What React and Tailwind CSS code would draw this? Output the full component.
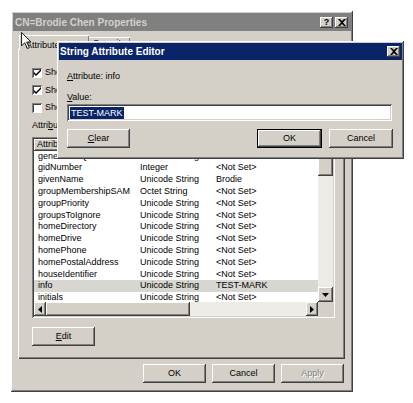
import React from "react";

const raised =
  "shadow-[inset_-1px_-1px_#404040,inset_1px_1px_#ffffff,inset_-2px_-2px_#808080,inset_2px_2px_#d4d0c8]";
const sunken =
  "shadow-[inset_1px_1px_#808080,inset_-1px_-1px_#ffffff,inset_2px_2px_#404040,inset_-2px_-2px_#d4d0c8]";
const smallRaised =
  "shadow-[inset_-1px_-1px_#404040,inset_1px_1px_#ffffff,inset_-2px_-2px_#808080]";

const rows = [
  ["generationQualifier", "Unicode String", "<Not Set>"],
  ["gidNumber", "Integer", "<Not Set>"],
  ["givenName", "Unicode String", "Brodie"],
  ["groupMembershipSAM", "Octet String", "<Not Set>"],
  ["groupPriority", "Unicode String", "<Not Set>"],
  ["groupsToIgnore", "Unicode String", "<Not Set>"],
  ["homeDirectory", "Unicode String", "<Not Set>"],
  ["homeDrive", "Unicode String", "<Not Set>"],
  ["homePhone", "Unicode String", "<Not Set>"],
  ["homePostalAddress", "Unicode String", "<Not Set>"],
  ["houseIdentifier", "Unicode String", "<Not Set>"],
  ["info", "Unicode String", "TEST-MARK"],
  ["initials", "Unicode String", "<Not Set>"],
];

const CloseGlyph = () => (
  <svg width="8" height="7" viewBox="0 0 8 7">
    <path d="M0 0h2l2 2 2-2h2L5 3.5 8 7H6L4 5 2 7H0l3-3.5z" fill="#000" />
  </svg>
);

const Btn = ({ children, className = "" }) => (
  <div
    className={`flex items-center justify-center bg-[#d4d0c8] ${raised} ${className}`}
  >
    {children}
  </div>
);

const Checkbox = ({ checked, label }) => (
  <div className="flex h-[17.5px] items-center gap-[3px] whitespace-nowrap">
    <div className="flex h-[10px] w-[10px] items-center justify-center bg-white shadow-[inset_1px_1px_#808080,inset_-1px_-1px_#ffffff,inset_2px_2px_#404040]">
      {checked && (
        <svg width="7" height="7" viewBox="0 0 7 7">
          <path d="M0 3l2 2 5-5v2L2 7 0 5z" fill="#000" />
        </svg>
      )}
    </div>
    <span>{label}</span>
  </div>
);

const Arrow = ({ dir }) => {
  const d = {
    down: "M0 0h7L3.5 4z",
    left: "M4 0v7L0 3.5z",
    right: "M0 0v7l4-3.5z",
  }[dir];
  const box = dir === "down" ? "0 0 7 4" : "0 0 4 7";
  return (
    <svg width={dir === "down" ? 7 : 4} height={dir === "down" ? 4 : 7} viewBox={box}>
      <path d={d} fill="#000" />
    </svg>
  );
};

export default function App() {
  return (
    <div className="relative h-[403px] w-[413px] overflow-hidden bg-white font-['Liberation_Sans',Arial,sans-serif] text-[9px] text-black">
      {/* Properties window */}
      <div
        className={`absolute left-[11px] top-[11px] z-0 flex h-[381px] w-[342px] flex-col bg-[#d4d0c8] p-[2px] ${raised}`}
      >
        <div className="flex h-[18px] items-center justify-between bg-[#808080] pl-[2px] pr-[3px]">
          <span className="text-[10px] font-bold text-[#d4d0c8]">
            CN=Brodie Chen Properties
          </span>
          <div className="flex gap-[2px]">
            <div className={`flex h-[11px] w-[13px] items-center justify-center bg-[#d4d0c8] text-[9px] font-bold leading-none ${smallRaised}`}>
              ?
            </div>
            <div className={`flex h-[11px] w-[13px] items-center justify-center bg-[#d4d0c8] ${smallRaised}`}>
              <CloseGlyph />
            </div>
          </div>
        </div>

        <div className="flex flex-1 flex-col pl-[5px] pr-[6px]">
          {/* tabs */}
          <div className="mt-[4px] flex h-[14px] items-end whitespace-nowrap leading-none">
            <div className="relative z-10 -mb-[1px] ml-[1px] flex h-[15px] w-[70px] items-end overflow-hidden border-l border-t border-white bg-[#d4d0c8] pl-[6px] shadow-[inset_-1px_0_#808080]">
              Attribute Editor
            </div>
            <div className="flex h-[12px] w-[41px] items-end overflow-hidden border-t border-white bg-[#d4d0c8] pb-[1px] pl-[4px] shadow-[inset_-1px_0_#808080]">
              Security
            </div>
          </div>

          {/* tab pane */}
          <div className="flex h-[310px] flex-col border-l border-t border-white px-[13px] pt-[14px] shadow-[inset_-1px_-1px_#404040,inset_-2px_-2px_#808080]">
            <Checkbox checked label="Show mandatory attributes" />
            <Checkbox checked label="Show optional attributes" />
            <Checkbox label="Show only attributes that have values" />
            <div className="mt-[3px] flex h-[12px] items-center">
              Attri<span className="underline">b</span>utes:
            </div>

            {/* list view */}
            <div className={`mt-[5.5px] h-[181px] w-[303px] bg-white p-[2px] ${sunken}`}>
              <div className="grid h-full grid-cols-[284px_15px] grid-rows-[163px_14px]">
                <div className="overflow-hidden">
                  <div className="flex h-[11.5px]">
                    <div className={`flex w-[102px] items-center bg-[#d4d0c8] pl-[3px] ${smallRaised}`}>
                      Attribute
                    </div>
                    <div className={`flex w-[76px] items-center bg-[#d4d0c8] pl-[3px] ${smallRaised}`}>
                      Syntax
                    </div>
                    <div className={`flex flex-1 items-center bg-[#d4d0c8] pl-[3px] ${smallRaised}`}>
                      Value
                    </div>
                  </div>
                  {rows.map(([name, syntax, value]) => (
                    <div
                      key={name}
                      className={`flex h-[11.8px] items-center whitespace-nowrap ${name === "info" ? "bg-[#d8d6d0]" : ""}`}
                    >
                      <span className="w-[102px] pl-[4px]">{name}</span>
                      <span className="w-[76px] pl-[4px]">{syntax}</span>
                      <span className="pl-[4px]">{value}</span>
                    </div>
                  ))}
                </div>

                {/* vertical scrollbar */}
                <div className="flex flex-col bg-[#ecebe6]">
                  <Btn className="h-[15px] w-[15px]">
                    <Arrow dir="down" />
                  </Btn>
                  <div className={`h-[22px] w-[15px] bg-[#d4d0c8] ${smallRaised}`} />
                  <div className="flex-1" />
                  <div className={`flex h-[15px] w-[15px] items-center justify-center bg-[#d4d0c8] ${smallRaised}`}>
                    <Arrow dir="down" />
                  </div>
                </div>

                {/* horizontal scrollbar */}
                <div className="flex bg-[#ecebe6]">
                  <div className={`flex h-[14px] w-[12px] items-center justify-center bg-[#d4d0c8] ${smallRaised}`}>
                    <Arrow dir="left" />
                  </div>
                  <div className={`h-[14px] w-[144px] bg-[#d4d0c8] ${smallRaised}`} />
                  <div className="flex-1" />
                  <div className={`flex h-[14px] w-[12px] items-center justify-center bg-[#d4d0c8] ${smallRaised}`}>
                    <Arrow dir="right" />
                  </div>
                </div>
                <div className="bg-[#d4d0c8]" />
              </div>
            </div>

            <Btn className="mt-[9px] h-[19px] w-[63px]">
              <span>
                <span className="underline">E</span>dit
              </span>
            </Btn>
          </div>

          {/* dialog buttons */}
          <div className="mt-[5px] flex justify-end gap-[6px] pr-[1px]">
            <Btn className="h-[19px] w-[63px]">OK</Btn>
            <Btn className="h-[19px] w-[63px]">Cancel</Btn>
            <Btn className="h-[19px] w-[63px] text-[#808080] [text-shadow:1px_1px_#ffffff]">
              Apply
            </Btn>
          </div>
        </div>
      </div>

      {/* mouse cursor */}
      <svg
        className="absolute left-[21px] top-[32px] z-20"
        width="11"
        height="17"
        viewBox="0 0 12 19"
      >
        <path
          d="M0.5 0.5v15l3.5-3.5 3 6.5 2.2-1-3-6.3H11z"
          fill="#fff"
          stroke="#000"
          strokeWidth="1"
          strokeLinejoin="miter"
        />
      </svg>

      {/* String Attribute Editor */}
      <div
        className={`absolute left-[57px] top-[41px] z-10 flex h-[118px] w-[347px] flex-col bg-[#d4d0c8] p-[2px] ${raised}`}
      >
        <div className="flex h-[17px] items-center justify-between bg-[#0a246a] pl-[1px] pr-[2px]">
          <span className="text-[10px] font-bold text-white">String Attribute Editor</span>
          <div className={`flex h-[11px] w-[13px] items-center justify-center bg-[#d4d0c8] ${smallRaised}`}>
            <CloseGlyph />
          </div>
        </div>
        <div className="flex flex-col pl-[8px] pr-[9px]">
          <div className="mt-[11px] flex h-[12px] items-center">
            <span>
              <span className="underline">A</span>ttribute: info
            </span>
          </div>
          <div className="mt-[9px] flex h-[12px] items-center">
            <span>
              <span className="underline">V</span>alue:
            </span>
          </div>
          <div className={`flex h-[17px] w-[325px] items-center bg-white pl-[3px] ${sunken}`}>
            <span className="bg-[#0a246a] px-[1px] leading-[12px] text-white">TEST-MARK</span>
          </div>
          <div className="mt-[8px] flex items-center justify-between">
            <Btn className="h-[19px] w-[63px]">
              <span>
                <span className="underline">C</span>lear
              </span>
            </Btn>
            <div className="flex gap-[7px]">
              <div className="h-[19px] w-[65px] border border-black">
                <Btn className="h-full w-full">OK</Btn>
              </div>
              <Btn className="h-[19px] w-[64px]">Cancel</Btn>
            </div>
          </div>
        </div>
      </div>
    </div>
  );
}
